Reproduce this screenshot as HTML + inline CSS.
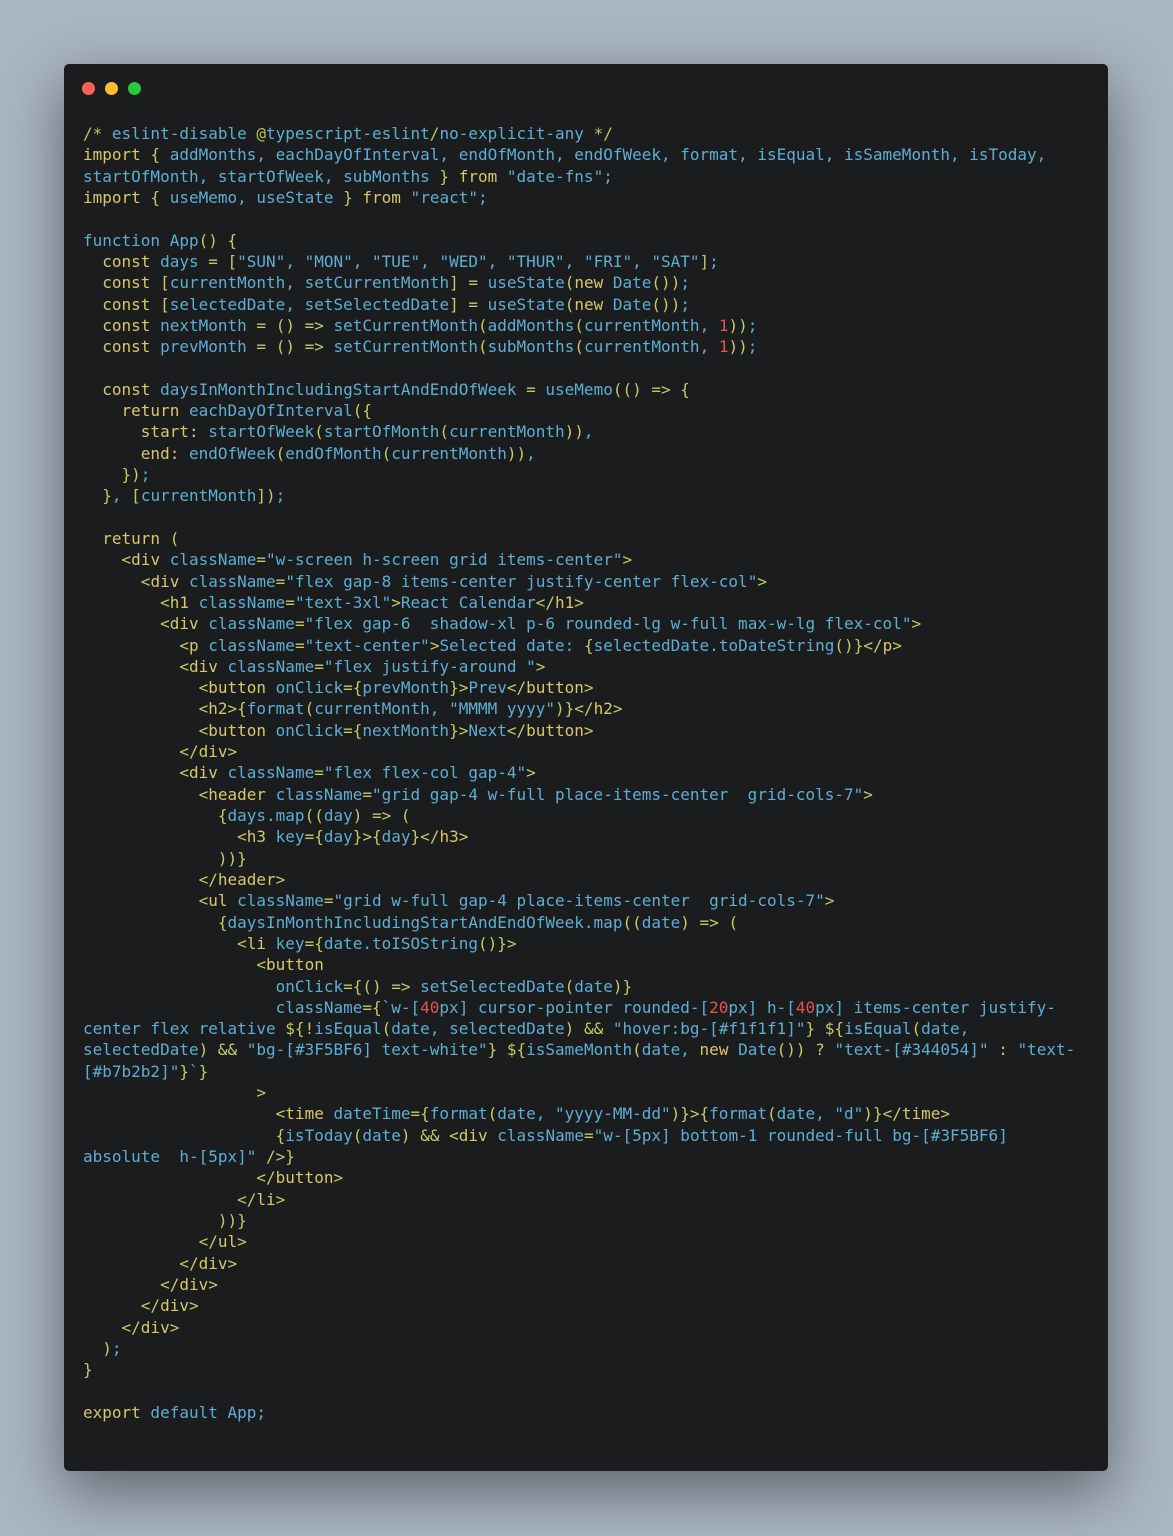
<!DOCTYPE html>
<html><head><meta charset="utf-8"><style>
html,body{margin:0;padding:0}
body{width:1173px;height:1536px;background:#a9b5c1;position:relative;overflow:hidden}
.win{position:absolute;left:64px;top:64px;width:1044px;height:1407px;background:#1b1c1e;border-radius:5px;box-shadow:0 20px 60px rgba(0,0,0,0.45)}
.dot{position:absolute;top:82px;width:13px;height:13px;border-radius:50%}
pre{position:absolute;left:83px;top:123px;margin:0;font-family:"DejaVu Sans Mono","Liberation Mono",monospace;font-size:16px;line-height:21.32px;color:#5eaed4;white-space:pre}
.k{color:#d9c76c}
.p{color:#c3cb66}
.n{color:#e0564f}
.c{color:#b8c45c}
</style></head><body>
<div class="win"></div>
<div class="dot" style="left:82px;background:#fe5f57"></div>
<div class="dot" style="left:105px;background:#febc2e"></div>
<div class="dot" style="left:128px;background:#28c840"></div>
<pre><span class="c">/*</span> eslint-disable <span class="c">@</span>typescript-eslint<span class="c">/</span>no-explicit-any <span class="c">*/</span>
<span class="k">import</span> <span class="p">{</span> addMonths, eachDayOfInterval, endOfMonth, endOfWeek, format, isEqual, isSameMonth, isToday,
startOfMonth, startOfWeek, subMonths <span class="p">}</span> <span class="k">from</span> "date-fns";
<span class="k">import</span> <span class="p">{</span> useMemo, useState <span class="p">}</span> <span class="k">from</span> "react";

function App<span class="p">()</span> <span class="p">{</span>
  <span class="k">const</span> days <span class="p">=</span> <span class="p">[</span>"SUN", "MON", "TUE", "WED", "THUR", "FRI", "SAT"<span class="p">]</span>;
  <span class="k">const</span> <span class="p">[</span>currentMonth, setCurrentMonth<span class="p">]</span> <span class="p">=</span> useState<span class="p">(</span><span class="k">new</span> Date<span class="p">())</span>;
  <span class="k">const</span> <span class="p">[</span>selectedDate, setSelectedDate<span class="p">]</span> <span class="p">=</span> useState<span class="p">(</span><span class="k">new</span> Date<span class="p">())</span>;
  <span class="k">const</span> nextMonth <span class="p">=</span> <span class="p">()</span> <span class="p">=&gt;</span> setCurrentMonth<span class="p">(</span>addMonths<span class="p">(</span>currentMonth, <span class="n">1</span><span class="p">))</span>;
  <span class="k">const</span> prevMonth <span class="p">=</span> <span class="p">()</span> <span class="p">=&gt;</span> setCurrentMonth<span class="p">(</span>subMonths<span class="p">(</span>currentMonth, <span class="n">1</span><span class="p">))</span>;

  <span class="k">const</span> daysInMonthIncludingStartAndEndOfWeek <span class="p">=</span> useMemo<span class="p">(()</span> <span class="p">=&gt;</span> <span class="p">{</span>
    <span class="k">return</span> eachDayOfInterval<span class="p">({</span>
      <span class="k">start:</span> startOfWeek<span class="p">(</span>startOfMonth<span class="p">(</span>currentMonth<span class="p">))</span>,
      <span class="k">end:</span> endOfWeek<span class="p">(</span>endOfMonth<span class="p">(</span>currentMonth<span class="p">))</span>,
    <span class="p">})</span>;
  <span class="p">}</span>, <span class="p">[</span>currentMonth<span class="p">])</span>;

  <span class="k">return</span> <span class="p">(</span>
    <span class="p">&lt;</span><span class="k">div</span> className<span class="p">=</span>"w-screen h-screen grid items-center"<span class="p">&gt;</span>
      <span class="p">&lt;</span><span class="k">div</span> className<span class="p">=</span>"flex gap-8 items-center justify-center flex-col"<span class="p">&gt;</span>
        <span class="p">&lt;</span><span class="k">h1</span> className<span class="p">=</span>"text-3xl"<span class="p">&gt;</span>React Calendar<span class="p">&lt;/</span><span class="k">h1</span><span class="p">&gt;</span>
        <span class="p">&lt;</span><span class="k">div</span> className<span class="p">=</span>"flex gap-6  shadow-xl p-6 rounded-lg w-full max-w-lg flex-col"<span class="p">&gt;</span>
          <span class="p">&lt;</span><span class="k">p</span> className<span class="p">=</span>"text-center"<span class="p">&gt;</span>Selected date: <span class="p">{</span>selectedDate.toDateString<span class="p">()}&lt;/</span><span class="k">p</span><span class="p">&gt;</span>
          <span class="p">&lt;</span><span class="k">div</span> className<span class="p">=</span>"flex justify-around "<span class="p">&gt;</span>
            <span class="p">&lt;</span><span class="k">button</span> onClick<span class="p">={</span>prevMonth<span class="p">}&gt;</span>Prev<span class="p">&lt;/</span><span class="k">button</span><span class="p">&gt;</span>
            <span class="p">&lt;</span><span class="k">h2</span><span class="p">&gt;{</span>format<span class="p">(</span>currentMonth, "MMMM yyyy"<span class="p">)}&lt;/</span><span class="k">h2</span><span class="p">&gt;</span>
            <span class="p">&lt;</span><span class="k">button</span> onClick<span class="p">={</span>nextMonth<span class="p">}&gt;</span>Next<span class="p">&lt;/</span><span class="k">button</span><span class="p">&gt;</span>
          <span class="p">&lt;/</span><span class="k">div</span><span class="p">&gt;</span>
          <span class="p">&lt;</span><span class="k">div</span> className<span class="p">=</span>"flex flex-col gap-4"<span class="p">&gt;</span>
            <span class="p">&lt;</span><span class="k">header</span> className<span class="p">=</span>"grid gap-4 w-full place-items-center  grid-cols-7"<span class="p">&gt;</span>
              <span class="p">{</span>days.map<span class="p">((</span>day<span class="p">)</span> <span class="p">=&gt;</span> <span class="p">(</span>
                <span class="p">&lt;</span><span class="k">h3</span> key<span class="p">={</span>day<span class="p">}&gt;{</span>day<span class="p">}&lt;/</span><span class="k">h3</span><span class="p">&gt;</span>
              <span class="p">))}</span>
            <span class="p">&lt;/</span><span class="k">header</span><span class="p">&gt;</span>
            <span class="p">&lt;</span><span class="k">ul</span> className<span class="p">=</span>"grid w-full gap-4 place-items-center  grid-cols-7"<span class="p">&gt;</span>
              <span class="p">{</span>daysInMonthIncludingStartAndEndOfWeek.map<span class="p">((</span>date<span class="p">)</span> <span class="p">=&gt;</span> <span class="p">(</span>
                <span class="p">&lt;</span><span class="k">li</span> key<span class="p">={</span>date.toISOString<span class="p">()}&gt;</span>
                  <span class="p">&lt;</span><span class="k">button</span>
                    onClick<span class="p">={()</span> <span class="p">=&gt;</span> setSelectedDate<span class="p">(</span>date<span class="p">)}</span>
                    className<span class="p">={</span>`w-[<span class="n">40</span>px] cursor-pointer rounded-[<span class="n">20</span>px] h-[<span class="n">40</span>px] items-center justify-
center flex relative <span class="p">${!</span>isEqual<span class="p">(</span>date, selectedDate<span class="p">)</span> <span class="p">&amp;&amp;</span> "hover:bg-[#f1f1f1]"<span class="p">}</span> <span class="p">${</span>isEqual<span class="p">(</span>date,
selectedDate<span class="p">)</span> <span class="p">&amp;&amp;</span> "bg-[#3F5BF6] text-white"<span class="p">}</span> <span class="p">${</span>isSameMonth<span class="p">(</span>date, <span class="k">new</span> Date<span class="p">())</span> <span class="p">?</span> "text-[#344054]" <span class="p">:</span> "text-
[#b7b2b2]"<span class="p">}</span>`<span class="p">}</span>
                  <span class="p">&gt;</span>
                    <span class="p">&lt;</span><span class="k">time</span> dateTime<span class="p">={</span>format<span class="p">(</span>date, "yyyy-MM-dd"<span class="p">)}&gt;{</span>format<span class="p">(</span>date, "d"<span class="p">)}&lt;/</span><span class="k">time</span><span class="p">&gt;</span>
                    <span class="p">{</span>isToday<span class="p">(</span>date<span class="p">)</span> <span class="p">&amp;&amp;</span> <span class="p">&lt;</span><span class="k">div</span> className<span class="p">=</span>"w-[5px] bottom-1 rounded-full bg-[#3F5BF6]
absolute  h-[5px]" <span class="p">/&gt;}</span>
                  <span class="p">&lt;/</span><span class="k">button</span><span class="p">&gt;</span>
                <span class="p">&lt;/</span><span class="k">li</span><span class="p">&gt;</span>
              <span class="p">))}</span>
            <span class="p">&lt;/</span><span class="k">ul</span><span class="p">&gt;</span>
          <span class="p">&lt;/</span><span class="k">div</span><span class="p">&gt;</span>
        <span class="p">&lt;/</span><span class="k">div</span><span class="p">&gt;</span>
      <span class="p">&lt;/</span><span class="k">div</span><span class="p">&gt;</span>
    <span class="p">&lt;/</span><span class="k">div</span><span class="p">&gt;</span>
  <span class="p">)</span>;
<span class="p">}</span>

<span class="k">export</span> default App;</pre>
</body></html>
